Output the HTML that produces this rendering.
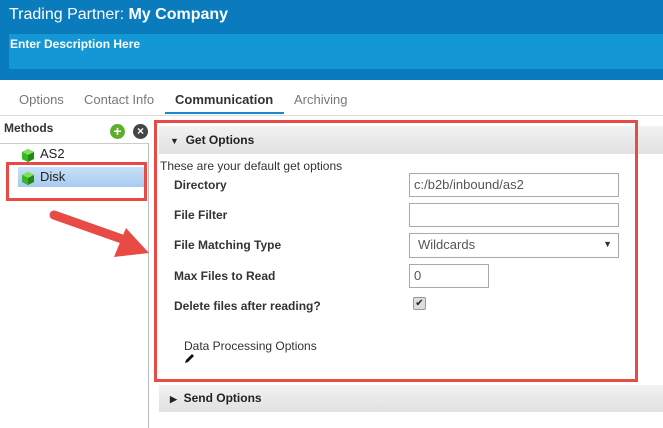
<!DOCTYPE html>
<html><head><style>
body{margin:0;width:663px;height:428px;overflow:hidden;background:#fff;font-family:"Liberation Sans",Arial,sans-serif;position:relative}
.a{position:absolute}
.inp{position:absolute;border:1px solid #a9a9a9;background:#fff;font-size:13px;color:#555;box-sizing:border-box;padding:3px 4px}
.lbl{position:absolute;left:174px;font-size:12px;font-weight:bold;color:#333}
</style></head><body>
<div class="a" style="left:0;top:0;width:663px;height:80px;background:#0a7bbd"></div>
<div class="a" style="left:9px;top:6px;color:#fff;font-size:16px">Trading Partner: <b>My Company</b></div>
<div class="a" style="left:9px;top:34px;width:654px;height:35px;background:#1497d5"></div>
<div class="a" style="left:10px;top:37px;color:#fff;font-size:12px;font-weight:bold">Enter Description Here</div>
<div class="a" style="left:19px;top:92px;font-size:13px;color:#777">Options</div>
<div class="a" style="left:84px;top:92px;font-size:13px;color:#777">Contact Info</div>
<div class="a" style="left:175px;top:92px;font-size:13px;color:#333;font-weight:bold">Communication</div>
<div class="a" style="left:294px;top:92px;font-size:13px;color:#777">Archiving</div>
<div class="a" style="left:165px;top:112px;width:119px;height:2px;background:#1a88c9"></div>
<div class="a" style="left:0;top:115px;width:663px;height:1px;background:#ddd"></div>
<div class="a" style="left:4px;top:121px;font-size:12px;font-weight:bold;color:#333">Methods</div>
<div class="a" style="left:110px;top:124px;width:15px;height:15px;border-radius:50%;background:#5fae2b;color:#fff;font-size:14px;font-weight:bold;text-align:center;line-height:15px">+</div>
<div class="a" style="left:133px;top:124px;width:15px;height:15px;border-radius:50%;background:#444;color:#fff;font-size:12px;font-weight:bold;text-align:center;line-height:15px">×</div>
<div class="a" style="left:0;top:143px;width:148px;height:1px;background:#ccc"></div>
<div class="a" style="left:148px;top:143px;width:1px;height:285px;background:#bbb"></div>
<svg class="a" style="left:22px;top:149px" width="12" height="13"><polygon points="6,0 12,3 12,10 6,13 0,10 0,3" fill="#1f8a14"/><polygon points="6,0 12,3 6,6 0,3" fill="#7fe05a"/><polygon points="0,3 6,6 6,13 0,10" fill="#3cb527"/></svg>
<div class="a" style="left:40px;top:146px;font-size:13px;color:#222">AS2</div>
<div class="a" style="left:18px;top:167px;width:128px;height:20px;background:linear-gradient(#c9e0f7,#a6cbf0)"></div>
<svg class="a" style="left:22px;top:172px" width="12" height="13"><polygon points="6,0 12,3 12,10 6,13 0,10 0,3" fill="#1f8a14"/><polygon points="6,0 12,3 6,6 0,3" fill="#7fe05a"/><polygon points="0,3 6,6 6,13 0,10" fill="#3cb527"/></svg>
<div class="a" style="left:40px;top:169px;font-size:13px;color:#222">Disk</div>
<div class="a" style="left:6px;top:162px;width:135px;height:33px;border:3px solid #e84a45"></div>
<div class="a" style="left:159px;top:126px;width:504px;height:28px;background:linear-gradient(#f2f2f2,#e2e0e0)"></div>
<div class="a" style="left:170px;top:133px;font-size:12px;font-weight:bold;color:#222"><span style="font-size:9px">▼</span>&nbsp; Get Options</div>
<div class="a" style="left:160px;top:159px;font-size:12px;color:#333">These are your default get options</div>
<div class="lbl" style="top:178px">Directory</div>
<div class="lbl" style="top:208px">File Filter</div>
<div class="lbl" style="top:238px">File Matching Type</div>
<div class="lbl" style="top:269px">Max Files to Read</div>
<div class="lbl" style="top:299px">Delete files after reading?</div>
<div class="inp" style="left:409px;top:173px;width:210px;height:24px">c:/b2b/inbound/as2</div>
<div class="inp" style="left:409px;top:203px;width:210px;height:24px"></div>
<div class="inp" style="left:409px;top:233px;width:210px;height:25px;padding-left:8px">Wildcards<span style="position:absolute;right:6px;top:5px;font-size:9px;color:#333">▼</span></div>
<div class="inp" style="left:409px;top:264px;width:80px;height:24px">0</div>
<div class="a" style="left:413px;top:297px;width:11px;height:11px;border:1px solid #999;border-radius:2px;background:#ddd;font-size:10px;line-height:11px;text-align:center;color:#222">✔</div>
<div class="a" style="left:184px;top:339px;font-size:12px;color:#333">Data Processing Options</div>
<svg class="a" style="left:184px;top:353px" width="11" height="11"><path d="M1,10 L2,7 L8,1 L10,3 L4,9 Z" fill="#111"/></svg>
<div class="a" style="left:154px;top:120px;width:478px;height:256px;border:3px solid #e84a45"></div>
<div class="a" style="left:159px;top:385px;width:504px;height:27px;background:linear-gradient(#f2f2f2,#e2e0e0)"></div>
<div class="a" style="left:170px;top:391px;font-size:12px;font-weight:bold;color:#222"><span style="font-size:9px">▶</span>&nbsp; Send Options</div>
<svg class="a" style="left:0;top:0" width="663" height="428"><line x1="54" y1="215" x2="122" y2="239" stroke="#e84a45" stroke-width="9" stroke-linecap="round"/><polygon points="126,228 149,253 114,257" fill="#e84a45"/></svg>
</body></html>
